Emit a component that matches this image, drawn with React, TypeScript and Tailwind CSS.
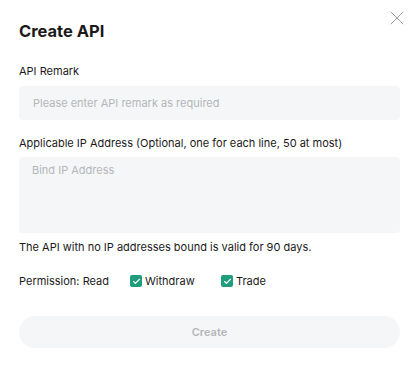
import { X, Check } from 'lucide-react';

function CheckItem({ label }: { label: string }) {
  return (
    <label className="flex items-center gap-[3px]">
      <span className="flex h-[12px] w-[12px] items-center justify-center rounded-[2px] bg-[#1f9d7c]">
        <Check size={9} strokeWidth={3} className="text-white" />
      </span>
      <span>{label}</span>
    </label>
  );
}

export default function App() {
  return (
    <div className="relative h-[365px] w-[416px] bg-white pl-[19px] pr-[16px] pt-[20px] text-[#1a1a1a] [font-family:Inter,'Noto_Sans',sans-serif]">
      <button className="absolute right-[7px] top-[6px] text-[#a0a2a6]">
        <X size={24} strokeWidth={1} />
      </button>

      <h1 className="text-[16.5px] font-bold leading-[22px]">Create API</h1>

      <div className="mt-[21px] text-[11px] leading-[16px]">API Remark</div>
      <input
        className="mt-[7px] h-[34px] w-full rounded-[4px] bg-[#f5f6f7] px-[14px] text-[11px] outline-none placeholder:text-[#b4b6ba]"
        placeholder="Please enter API remark as required"
      />

      <div className="mt-[15px] text-[11px] leading-[16px]">
        Applicable IP Address (Optional, one for each line, 50 at most)
      </div>
      <textarea
        className="mt-[6px] block h-[76px] w-full resize-none rounded-[4px] bg-[#f5f6f7] px-[13px] py-[5px] text-[11px] leading-[16px] outline-none placeholder:text-[#b4b6ba]"
        placeholder="Bind IP Address"
      />

      <div className="mt-[6px] text-[11px] leading-[16px]">
        The API with no IP addresses bound is valid for 90 days.
      </div>

      <div className="mt-[18px] flex items-center text-[11px] leading-[16px]">
        <span className="w-[111px]">Permission: Read</span>
        <div className="w-[91px]">
          <CheckItem label="Withdraw" />
        </div>
        <CheckItem label="Trade" />
      </div>

      <button className="mt-[27px] h-[32px] w-full rounded-full bg-[#f5f6f7] text-[11px] font-semibold text-[#b4b6ba]">
        Create
      </button>
    </div>
  );
}
